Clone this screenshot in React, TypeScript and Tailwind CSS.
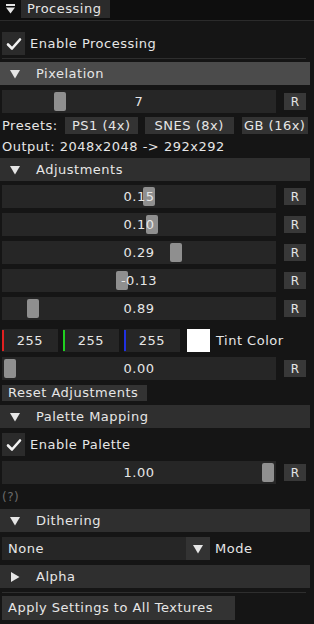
import React from 'react';

const FONT = { fontFamily: '"DejaVu Sans", "Liberation Sans", sans-serif' };

function Arrow({ open = true }: { open?: boolean }) {
  return (
    <svg width="10" height="10" viewBox="0 0 10 10" className="shrink-0">
      {open ? <polygon points="0,1 10,1 5,9.5" fill="#e6e6e6" /> : <polygon points="1,0 9.5,5 1,10" fill="#e6e6e6" />}
    </svg>
  );
}

function Header({ label, open = true, hot = false, className = '' }: { label: string; open?: boolean; hot?: boolean; className?: string }) {
  return (
    <div className={`flex items-center h-[23px] w-[310px] pl-[10px] ${hot ? 'bg-[#4b4b4b]' : 'bg-[#2f2f2f]'} ${className}`}>
      <Arrow open={open} />
      <span className="ml-[16px]">{label}</span>
    </div>
  );
}

function Check({ label, className = '' }: { label: string; className?: string }) {
  return (
    <div className={`flex items-center gap-[5px] h-[23px] pl-[2px] ${className}`}>
      <div className="w-[23px] h-[23px] bg-[#2b2b2b] flex items-center justify-center">
        <svg width="16" height="16" viewBox="0 0 16 16">
          <path d="M2 8.5 L6 12.5 L14 3.5" stroke="#f2f2f2" strokeWidth="2.6" fill="none" strokeLinecap="round" strokeLinejoin="round" />
        </svg>
      </div>
      <span>{label}</span>
    </div>
  );
}

function Slider({ value, grab, reset = true, className = '' }: { value: string; grab: number; reset?: boolean; className?: string }) {
  return (
    <div className={`flex items-center h-[23px] pl-[2px] ${className}`}>
      <div className="relative w-[274px] h-[23px] bg-[#262626] flex items-center justify-center">
        <div className="absolute top-[2px] bottom-[2px] w-[12px] rounded-[2px] bg-[#8f8f8f]" style={{ left: grab - 2 }} />
        <span className="relative">{value}</span>
      </div>
      {reset && (
        <div className="ml-[8px] w-[22px] h-[17px] bg-[#383838] flex items-center justify-center text-[12px] tracking-normal">R</div>
      )}
    </div>
  );
}

function ColorField({ bar, value }: { bar: string; value: string }) {
  return (
    <div className="relative w-[56px] h-[23px] bg-[#262626] flex items-center justify-center">
      <div className={`absolute left-0 top-[1px] bottom-[1px] w-[2px] ${bar}`} />
      <span>{value}</span>
    </div>
  );
}

function Btn({ label, className = '' }: { label: string; className?: string }) {
  return <div className={`flex items-center bg-[#333333] whitespace-nowrap ${className}`}>{label}</div>;
}

export default function App() {
  const sliders = [
    { v: '0.15', g: 143 },
    { v: '0.10', g: 146 },
    { v: '0.29', g: 170 },
    { v: '-0.13', g: 116 },
    { v: '0.89', g: 27 },
  ];

  return (
    <div className="w-[314px] h-[624px] bg-[#151515] text-[#e6e6e6] text-[13px] tracking-[0.5px] overflow-hidden" style={FONT}>
      {/* Title / tab bar */}
      <div className="h-[21px] bg-[#0e0e0e] border-b border-[#2b2b2b] flex items-start">
        <div className="w-[21px] h-[18px] flex items-center justify-center">
          <svg width="9" height="10" viewBox="0 0 9 10">
            <rect x="0" y="0" width="9" height="2" fill="#e6e6e6" />
            <polygon points="0,3.5 9,3.5 4.5,9.5" fill="#e6e6e6" />
          </svg>
        </div>
        <div className="h-[18px] w-[89px] bg-[#2b2b2b] flex items-center pl-[6px]">Processing</div>
      </div>

      <div className="flex flex-col">
        <Check label="Enable Processing" className="mt-[11px]" />
        <div className="mt-[3px] ml-[2px] w-[304px] h-px bg-[#2e2e2e]" />

        {/* Pixelation */}
        <Header label="Pixelation" hot className="mt-[3px]" />
        <Slider value="7" grab={54} className="mt-[5px]" />
        <div className="mt-[4px] h-[17px] flex items-center pl-[2px]">
          <span>Presets:</span>
          <Btn label="PS1 (4x)" className="ml-[7px] w-[73px] h-[17px] justify-center" />
          <Btn label="SNES (8x)" className="ml-[7px] w-[89px] h-[17px] justify-center" />
          <Btn label="GB (16x)" className="ml-[8px] w-[66px] h-[17px] justify-center" />
        </div>
        <div className="mt-[4px] h-[17px] flex items-center pl-[2px]">Output: 2048x2048 -&gt; 292x292</div>

        {/* Adjustments */}
        <Header label="Adjustments" className="mt-[3px]" />
        <div className="mt-[4px] flex flex-col gap-[5px]">
          {sliders.map((s) => (
            <Slider key={s.v} value={s.v} grab={s.g} />
          ))}
        </div>
        <div className="mt-[9px] h-[23px] flex items-center pl-[2px] gap-[5px]">
          <ColorField bar="bg-[#e02020]" value="255" />
          <ColorField bar="bg-[#20d020]" value="255" />
          <ColorField bar="bg-[#2030e0]" value="255" />
          <div className="ml-[2px] w-[23px] h-[23px] bg-white" />
          <span className="ml-[1px]">Tint Color</span>
        </div>
        <Slider value="0.00" grab={4} className="mt-[5px]" />
        <Btn label="Reset Adjustments" className="mt-[5px] ml-[2px] w-[145px] h-[16px] pl-[6px]" />

        {/* Palette Mapping */}
        <Header label="Palette Mapping" className="mt-[4px]" />
        <Check label="Enable Palette" className="mt-[5px]" />
        <Slider value="1.00" grab={262} className="mt-[5px]" />
        <div className="mt-[4px] h-[17px] pl-[2px] flex items-center text-[12px] text-[#6b6b6b]">(?)</div>

        {/* Dithering */}
        <Header label="Dithering" className="mt-[4px]" />
        <div className="mt-[5px] h-[23px] flex items-center pl-[2px]">
          <div className="w-[184px] h-[23px] bg-[#262626] flex items-center pl-[6px]">None</div>
          <div className="w-[24px] h-[23px] bg-[#333333] flex items-center justify-center">
            <Arrow />
          </div>
          <span className="ml-[5px]">Mode</span>
        </div>

        {/* Alpha */}
        <Header label="Alpha" open={false} className="mt-[5px]" />
        <div className="mt-[4px] ml-[2px] w-[304px] h-px bg-[#2e2e2e]" />
        <Btn label="Apply Settings to All Textures" className="mt-[3px] ml-[2px] w-[233px] h-[24px] pl-[6px]" />
      </div>
    </div>
  );
}
